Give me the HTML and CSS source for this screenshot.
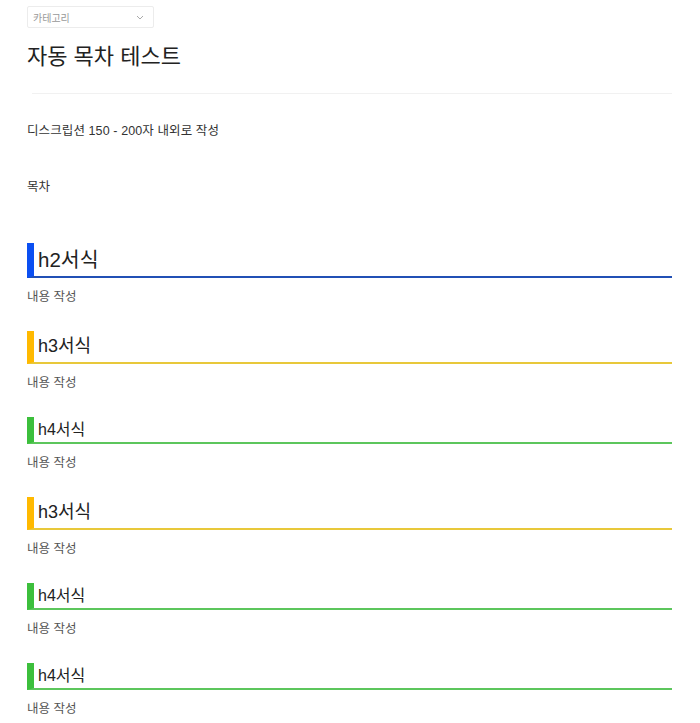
FILE: index.html
```html
<!DOCTYPE html>
<html lang="ko">
<head>
    <meta charset="utf-8">
    <title>자동 목차 테스트</title>
    <link rel="stylesheet" href="styles.css">
</head>
<body>
    <div class="category-select">
        <span>카테고리</span>
        <svg class="chevron" width="8" height="5" viewBox="0 0 8 5"><path d="M1 1 L4 4 L7 1" fill="none" stroke="#aaa" stroke-width="1"/></svg>
    </div>
    <h1 class="post-title">자동 목차 테스트</h1>
    <hr class="divider">
    <p class="desc">디스크립션 150 - 200자 내외로 작성</p>
    <p class="toc">목차</p>

    <!-- 본문 -->
    <section class="post-body">
        <h2 class="head head-h2">h2서식</h2>
        <p class="content">내용 작성</p>
        <h3 class="head head-h3">h3서식</h3>
        <p class="content">내용 작성</p>
        <h4 class="head head-h4">h4서식</h4>
        <p class="content">내용 작성</p>
        <h3 class="head head-h3">h3서식</h3>
        <p class="content">내용 작성</p>
        <h4 class="head head-h4">h4서식</h4>
        <p class="content">내용 작성</p>
        <h4 class="head head-h4">h4서식</h4>
        <p class="content">내용 작성</p>
    </section>
</body>
</html>
```

FILE: styles.css
```css
body, html {
    margin: 0;
    background: #fff;
}
body {
    padding: 6px 28px 0 27px;
    font-family: "Liberation Sans", "Noto Sans CJK KR", sans-serif;
    color: #333;
}
.category-select {
    width: 127px;
    height: 22px;
    box-sizing: border-box;
    border: 1px solid #ececec;
    border-radius: 2px;
    display: flex;
    align-items: center;
    justify-content: space-between;
    padding: 0 9px 0 5px;
    font-size: 10px;
    color: #999;
}
.post-title {
    margin: 14px 0 0 0;
    font-size: 22px;
    line-height: 30px;
    font-weight: normal;
    color: #222;
}
.divider {
    border: none;
    border-top: 1px solid #f1f1f1;
    margin: 21px 0 0 5px;
}
.desc {
    margin: 28px 0 0 0;
    font-size: 12.5px;
    line-height: 18px;
    letter-spacing: 0.1px;
    color: #333;
}
.toc {
    margin: 38px 0 0 0;
    font-size: 12.5px;
    line-height: 18px;
    color: #333;
}
.post-body {
    margin-top: 47px;
}
.head {
    margin: 0;
    padding-left: 4px;
    font-weight: normal;
    color: #222;
    border-left: 7px solid;
    border-bottom: 2px solid;
}
.head-h2 {
    font-size: 20.5px;
    line-height: 33px;
    border-left-color: #0b4ff2;
    border-bottom-color: #2150b5;
}
.head-h3 {
    font-size: 18px;
    line-height: 31px;
    border-left-color: #ffb900;
    border-bottom-color: #e8c83a;
}
.head-h4 {
    font-size: 16px;
    line-height: 25px;
    border-left-color: #3cbf3c;
    border-bottom-color: #5cc65c;
}
.content {
    margin: 10px 0 25px 0;
    font-size: 12.5px;
    line-height: 18px;
    color: #555;
}
```
